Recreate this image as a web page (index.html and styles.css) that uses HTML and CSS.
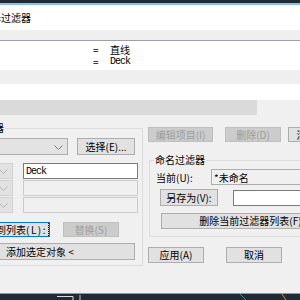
FILE: index.html
```html
<!DOCTYPE html>
<html lang="zh-CN">
<head>
	<meta charset="UTF-8">
	<title>对象选择过滤器</title>
	<link rel="stylesheet" href="styles.css">
</head>
<body>
	<div class="topbar"></div>
	<div class="titlebar">对象选择过滤器</div>

	<div class="list">
		<div class="list-head"></div>
		<div class="list-body">
			<div class="list-row"><span class="op">=</span><span class="val">直线</span></div>
			<div class="list-row"><span class="op">=</span><span class="val mono">Deck</span></div>
		</div>
		<div class="list-band"></div>
		<div class="list-blank"></div>
		<div class="hscroll"><div class="hscroll-thumb"></div></div>
	</div>

	<div class="dialog">
		<div class="group group-select">
			<span class="group-label">选择过滤器</span>
			<div class="row row-a">
				<div class="combo combo-main">
					<span>直线</span>
					<svg class="chev" width="9" height="5" viewBox="0 0 9 5"><path d="M0.5 0.5L4.5 4.5L8.5 0.5" fill="none" stroke="#7a7a7a"/></svg>
				</div>
				<button class="btn btn-select">选择(E)...</button>
			</div>
			<div class="row row-coord">
				<span class="coord-label">X:</span>
				<div class="combo combo-op"><svg class="chev" width="9" height="5" viewBox="0 0 9 5"><path d="M0.5 0.5L4.5 4.5L8.5 0.5" fill="none" stroke="#b4b4b4"/></svg></div>
				<div class="textbox"><span class="mono">Deck</span></div>
			</div>
			<div class="row row-coord">
				<span class="coord-label">Y:</span>
				<div class="combo combo-op"><svg class="chev" width="9" height="5" viewBox="0 0 9 5"><path d="M0.5 0.5L4.5 4.5L8.5 0.5" fill="none" stroke="#b4b4b4"/></svg></div>
				<div class="textbox textbox-off"></div>
			</div>
			<div class="row row-coord">
				<span class="coord-label">Z:</span>
				<div class="combo combo-op"><svg class="chev" width="9" height="5" viewBox="0 0 9 5"><path d="M0.5 0.5L4.5 4.5L8.5 0.5" fill="none" stroke="#b4b4b4"/></svg></div>
				<div class="textbox textbox-off"></div>
			</div>
			<div class="row row-e">
				<button class="btn btn-focus btn-addlist"><span>添加到列表<span class="hw">(L):</span></span></button>
				<button class="btn btn-off btn-replace">替换(S)</button>
			</div>
			<div class="row row-f">
				<button class="btn btn-addsel">添加选定对象 &lt;</button>
			</div>
		</div>

		<div class="side">
			<div class="row row-top">
				<button class="btn btn-off btn-edit">编辑项目(I)</button>
				<button class="btn btn-off btn-del">删除(D)</button>
				<button class="btn btn-clear">清除列表(C)</button>
			</div>
			<div class="group group-named">
				<span class="group-label">命名过滤器</span>
				<div class="row row-cur">
					<span class="cur-label">当前(U):</span>
					<div class="readbox">*未命名</div>
				</div>
				<div class="row row-save">
					<button class="btn btn-saveas">另存为(V):</button>
					<div class="textbox textbox-name"></div>
				</div>
				<div class="row row-delf">
					<button class="btn btn-delf">删除当前过滤器列表(F)</button>
				</div>
			</div>
			<div class="row row-bottom">
				<button class="btn btn-apply">应用(A)</button>
				<button class="btn btn-cancel">取消</button>
			</div>
		</div>
	</div>

	<div class="taskbar">
		<svg width="300" height="6" viewBox="0 0 300 6">
			<path d="M57 2.5H73V6" fill="none" stroke="#d8dde2"/>
			<path d="M80 1V6" fill="none" stroke="#c8ced4"/>
			<path d="M240 0L246 6" fill="none" stroke="#5b7a95"/>
			<path d="M282 0L286 6" fill="none" stroke="#d08a3a"/>
		</svg>
	</div>
</body>
</html>
```

FILE: styles.css
```css
* {
	box-sizing: border-box;
}

body {
	margin: 0;
	width: 300px;
	height: 300px;
	overflow: hidden;
	font-family: "Noto Sans CJK SC", sans-serif;
	font-size: 10px;
	color: #000;
	background: #f0f0f0;
}

.mono {
	font-family: "Liberation Mono", monospace;
	letter-spacing: -1px;
}

.hw {
	letter-spacing: 1.5px;
}

.topbar {
	height: 5px;
	background: #1f2a34;
	border-bottom: 2px solid #86c3ec;
}

.titlebar {
	height: 25px;
	line-height: 25px;
	background: #fff;
	text-indent: -39px;
	white-space: nowrap;
	font-size: 10px;
}

.list {
	background: #fff;
}

.list-head {
	height: 11px;
	background: #efefef;
	border-bottom: 1px solid #9e9ea6;
}

.list-body {
	height: 29px;
	padding-top: 3px;
}

.list-row {
	height: 12px;
	line-height: 12px;
	padding-left: 93px;
	display: flex;
}

.op {
	width: 17px;
}

.list-band {
	height: 14px;
	background: #efefef;
}

.list-blank {
	height: 16px;
}

.hscroll {
	height: 16px;
	background: #f0f0f0;
}

.hscroll-thumb {
	width: 257px;
	height: 15px;
	background: #dadada;
}

.dialog {
	height: 177px;
	display: flex;
	align-items: flex-start;
	background: #f0f0f0;
}

.group {
	position: relative;
	border: 1px solid #dcdcdc;
}

.group-label {
	position: absolute;
	top: -8px;
	line-height: 14px;
	padding: 0 1px;
	background: #f0f0f0;
	white-space: nowrap;
}

.group-select {
	flex: none;
	margin-left: -64px;
	margin-top: 12px;
	width: 207px;
	height: 138px;
	padding: 9px 0 0 8px;
}

.group-select .group-label {
	left: 16px;
}

.row {
	display: flex;
	align-items: center;
}

.btn {
	flex: none;
	margin: 0;
	padding: 0;
	border: 1px solid #adadad;
	background: #e1e1e1;
	font-family: inherit;
	font-size: 10px;
	line-height: 12px;
	color: #000;
	white-space: nowrap;
	display: flex;
	justify-content: center;
	align-items: center;
	overflow: hidden;
}

.btn-off {
	background: #cccccc;
	border-color: #bfbfbf;
	color: #9c9c9c;
}

.btn-focus {
	border-color: #0078d7;
}

.btn-focus > span {
	outline: 1px dotted #000;
	outline-offset: 1px;
}

.combo {
	flex: none;
	position: relative;
	border: 1px solid #adadad;
	background: #e3e3e3;
	display: flex;
	align-items: center;
	padding-left: 3px;
}

.chev {
	position: absolute;
	right: 4px;
	top: 50%;
	margin-top: -2px;
}

.textbox {
	flex: none;
	border: 1px solid #7a7a7a;
	background: #fff;
	display: flex;
	align-items: center;
	padding-left: 2px;
}

.textbox-off {
	border-color: #cccccc;
	background: #f0f0f0;
}

.row-a {
	height: 17px;
}

.combo-main {
	width: 123px;
	height: 17px;
}

.btn-select {
	width: 58px;
	height: 17px;
	margin-left: 9px;
}

.row-coord {
	height: 16px;
	margin-top: 1px;
}

.row-a + .row-coord {
	margin-top: 8px;
}

.coord-label {
	width: 30px;
}

.combo-op {
	width: 38px;
	height: 16px;
	background: #e2e2e2;
	border-color: #d0d0d0;
}

.row-coord .textbox {
	width: 115px;
	height: 16px;
	margin-left: 10px;
}

.row-e {
	margin-top: 9px;
	height: 15px;
}

.btn-addlist {
	width: 80px;
	height: 15px;
	margin-left: 25px;
	justify-content: flex-end;
	padding-right: 2px;
}

.btn-replace {
	width: 56px;
	height: 15px;
	margin-left: 13px;
}

.row-f {
	margin-top: 6px;
}

.btn-addsel {
	width: 190px;
	height: 17px;
}

.side {
	flex: none;
	width: 220px;
	margin-left: 5px;
	margin-top: 11px;
}

.row-top {
	height: 15px;
}

.btn-edit {
	width: 65px;
	height: 15px;
}

.btn-del {
	width: 56px;
	height: 15px;
	margin-left: 12px;
}

.btn-clear {
	width: 70px;
	height: 15px;
	margin-left: 7px;
}

.group-named {
	margin-top: 18px;
	margin-left: 1px;
	width: 200px;
	height: 77px;
	padding-top: 8px;
}

.group-named .group-label {
	left: 4px;
}

.row-cur {
	height: 16px;
}

.cur-label {
	width: 61px;
	padding-left: 6px;
	white-space: nowrap;
}

.readbox {
	width: 120px;
	height: 16px;
	border: 1px solid #adadad;
	background: #f0f0f0;
	padding-left: 2px;
	display: flex;
	align-items: center;
}

.row-save {
	margin-top: 4px;
	height: 17px;
}

.btn-saveas {
	width: 58px;
	height: 17px;
	margin-left: 10px;
}

.textbox-name {
	width: 100px;
	height: 16px;
	margin-left: 15px;
}

.row-delf {
	margin-top: 7px;
}

.btn-delf {
	width: 179px;
	height: 16px;
	margin-left: 11px;
}

.row-bottom {
	margin-top: 10px;
}

.btn-apply {
	width: 56px;
	height: 16px;
}

.btn-cancel {
	width: 56px;
	height: 16px;
	margin-left: 22px;
}

.taskbar {
	height: 7px;
	background: #1f2a34;
	border-top: 1px solid #5aa7dc;
	overflow: hidden;
}

.taskbar svg {
	display: block;
}
```
